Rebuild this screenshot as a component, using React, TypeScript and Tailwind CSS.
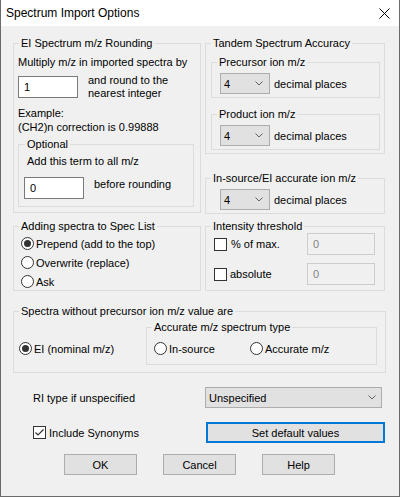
import React from 'react';

type GroupProps = {
  label: string;
  className?: string;
  legendClass?: string;
  children?: React.ReactNode;
};

const Group = ({ label, className = '', legendClass = 'ml-[5px]', children }: GroupProps) => (
  <fieldset className={`border border-[#dcdcdc] ${className}`}>
    <legend className={`px-[2px] leading-[16px] ${legendClass}`}>{label}</legend>
    {children}
  </fieldset>
);

const Radio = ({ checked = false, label }: { checked?: boolean; label: string }) => (
  <div className="flex h-[19px] items-center">
    <span className="flex h-[13px] w-[13px] shrink-0 items-center justify-center rounded-full border border-[#333333] bg-white">
      {checked && <span className="h-[7px] w-[7px] rounded-full bg-[#333333]" />}
    </span>
    <span className="ml-[2px] whitespace-nowrap">{label}</span>
  </div>
);

const Check = ({ checked = false }: { checked?: boolean }) => (
  <span className="flex h-[13px] w-[13px] shrink-0 items-center justify-center border border-[#333333] bg-white">
    {checked && (
      <svg width="11" height="11" viewBox="0 0 11 11">
        <path d="M1.5 5.5 L4 8 L9.5 2.5" fill="none" stroke="#333333" strokeWidth="1.2" />
      </svg>
    )}
  </span>
);

const Chevron = () => (
  <svg width="8" height="5" viewBox="0 0 8 5" className="shrink-0">
    <path d="M0.5 0.5 L4 4 L7.5 0.5" fill="none" stroke="#606060" strokeWidth="1" />
  </svg>
);

const Combo = ({ value, className = '' }: { value: string; className?: string }) => (
  <div
    className={`flex h-[21px] items-center justify-between border border-[#adadad] bg-[#e1e1e1] pl-[3px] ${className}`}
  >
    <span>{value}</span>
    <Chevron />
  </div>
);

const TextBox = ({ value }: { value: string }) => (
  <div className="flex h-[22px] w-[60px] shrink-0 items-center border border-[#7a7a7a] bg-white pl-[5px]">
    {value}
  </div>
);

const DisabledBox = () => (
  <div className="flex h-[22px] w-[68px] items-center border border-[#cccccc] bg-[#f0f0f0] pl-[5px] text-[#838383]">
    0
  </div>
);

const DecimalRow = ({ className = '' }: { className?: string }) => (
  <div className={`mt-[3px] flex items-center ${className}`}>
    <Combo value="4" className="w-[50px] pr-[6px]" />
    <span className="ml-[4px]">decimal places</span>
  </div>
);

const Btn = ({ label }: { label: string }) => (
  <button className="h-[21px] w-[73px] border border-[#adadad] bg-[#e1e1e1]">{label}</button>
);

export default function App() {
  return (
    <div className="h-[497px] w-[400px] border-x border-b border-[#6b6b6b] bg-[#f0f0f0] font-['Liberation_Sans',Arial,sans-serif] text-[11px] leading-[16px] text-black">
      <div className="flex h-[26px] items-center justify-between bg-white pl-[5px] pr-[9px]">
        <span className="text-[12px]">Spectrum Import Options</span>
        <svg width="11" height="11" viewBox="0 0 11 11">
          <path d="M0.5 0.5 L10.5 10.5 M10.5 0.5 L0.5 10.5" stroke="#000" strokeWidth="1" />
        </svg>
      </div>

      <div className="pl-[12px] pt-[9px]">
        {/* top row */}
        <div className="flex items-start gap-[4px]">
          <Group label="EI Spectrum m/z Rounding" className="h-[178px] w-[188px]">
            <div className="ml-[4px] mt-[3px] whitespace-nowrap">Multiply m/z in imported spectra by</div>
            <div className="ml-[4px] mt-[4px] flex items-center">
              <TextBox value="1" />
              <div className="ml-[10px] flex flex-col leading-[13px]">
                <span>and round to the</span>
                <span>nearest integer</span>
              </div>
            </div>
            <div className="ml-[4px] mt-[6px] flex flex-col whitespace-nowrap leading-[14px]">
              <span>Example:</span>
              <span>(CH2)n correction is 0.99888</span>
            </div>
            <Group label="Optional" className="ml-[4px] mt-[2px] h-[71px] w-[176px]" legendClass="ml-[6px]">
              <div className="ml-[8px] mt-[1px]">Add this term to all m/z</div>
              <div className="ml-[5px] mt-[8px] flex items-start">
                <TextBox value="0" />
                <span className="ml-[10px] mt-[-1px] whitespace-nowrap">before rounding</span>
              </div>
            </Group>
          </Group>

          <div className="flex flex-col">
            <Group label="Tandem Spectrum Accuracy" className="h-[119px] w-[180px]">
              <Group label="Precursor ion m/z" className="ml-[5px] mt-[3px] h-[44px] w-[169px]">
                <DecimalRow className="ml-[8px]" />
              </Group>
              <Group label="Product ion m/z" className="ml-[5px] mt-[8px] h-[44px] w-[169px]">
                <DecimalRow className="ml-[8px]" />
              </Group>
            </Group>
            <Group label="In-source/EI accurate ion m/z" className="mt-[16px] h-[44px] w-[180px]">
              <DecimalRow className="ml-[14px]" />
            </Group>
          </div>
        </div>

        {/* second row */}
        <div className="mt-[4px] flex items-start gap-[4px]">
          <Group label="Adding spectra to Spec List" className="h-[73px] w-[188px]">
            <div className="ml-[7px] flex flex-col">
              <Radio checked label="Prepend (add to the top)" />
              <Radio label="Overwrite (replace)" />
              <Radio label="Ask" />
            </div>
          </Group>
          <Group label="Intensity threshold" className="h-[73px] w-[180px]">
            <div className="ml-[8px] mt-[-1px] flex h-[22px] items-center">
              <div className="flex w-[93px] items-center">
                <Check />
                <span className="ml-[4px]">% of max.</span>
              </div>
              <DisabledBox />
            </div>
            <div className="ml-[8px] mt-[8px] flex h-[22px] items-center">
              <div className="flex w-[93px] items-center">
                <Check />
                <span className="ml-[3px]">absolute</span>
              </div>
              <DisabledBox />
            </div>
          </Group>
        </div>

        {/* precursor-less spectra */}
        <Group label="Spectra without precursor ion m/z value are" className="mt-[12px] h-[70px] w-[373px]">
          <div className="flex items-start">
            <div className="mt-[20px] w-[132px] pl-[5px]">
              <Radio checked label="EI (nominal m/z)" />
            </div>
            <Group label="Accurate m/z spectrum type" className="h-[46px] w-[231px]">
              <div className="mt-[4px] flex pl-[7px]">
                <div className="w-[96px]">
                  <Radio label="In-source" />
                </div>
                <Radio label="Accurate m/z" />
              </div>
            </Group>
          </div>
        </Group>

        <div className="mt-[14px] flex h-[21px] items-center">
          <span className="w-[192px] pl-[20px]">RI type if unspecified</span>
          <Combo value="Unspecified" className="w-[177px] pr-[5px]" />
        </div>

        <div className="mt-[14px] flex h-[21px] items-center">
          <div className="flex w-[193px] items-center pl-[20px]">
            <Check checked />
            <span className="ml-[3px]">Include Synonyms</span>
          </div>
          <button className="h-[21px] w-[179px] border-2 border-[#0078d7] bg-[#e1e1e1]">Set default values</button>
        </div>

        <div className="mt-[11px] flex gap-[26px] pl-[51px]">
          <Btn label="OK" />
          <Btn label="Cancel" />
          <Btn label="Help" />
        </div>
      </div>
    </div>
  );
}
